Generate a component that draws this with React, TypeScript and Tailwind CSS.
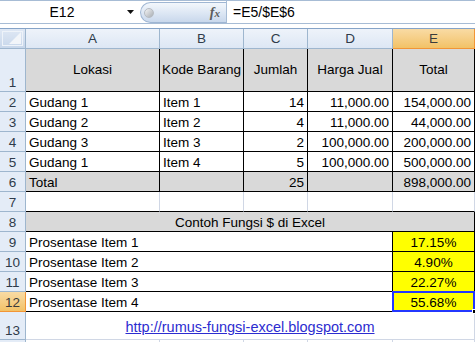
import React from "react";

const GRID = "border-[#d0d7e5]";

type CellProps = {
  children?: React.ReactNode;
  className?: string;
};

function HeadCol({ label, active }: { label: string; active?: boolean }) {
  return (
    <div
      className={
        active
          ? "flex items-center justify-center border-r border-b border-[#f29536] bg-gradient-to-b from-[#f9dba4] to-[#f2c266] text-[#3b3b3b]"
          : "flex items-center justify-center border-r border-b border-[#9eb6ce] bg-gradient-to-b from-[#eef3fa] to-[#dde7f4] text-[#2f3b4a]"
      }
    >
      {label}
    </div>
  );
}

function RowHead({ n, active }: { n: number; active?: boolean }) {
  return (
    <div
      className={
        active
          ? "flex items-end justify-center leading-[16px] border-r border-b border-[#f29536] bg-gradient-to-b from-[#f9dba4] to-[#f2c266] text-[#3b3b3b]"
          : "flex items-end justify-center leading-[16px] border-r border-b border-[#9eb6ce] bg-[#e4ecf7] text-[#2f3b4a]"
      }
    >
      {n}
    </div>
  );
}

function Cell({ children, className = "" }: CellProps) {
  return (
    <div
      className={`flex items-end leading-[16px] px-[3px] whitespace-nowrap overflow-hidden border-r border-b border-black ${className}`}
    >
      {children}
    </div>
  );
}

const rows = [
  { lokasi: "Gudang 1", kode: "Item 1", jumlah: "14", harga: "11,000.00", total: "154,000.00" },
  { lokasi: "Gudang 2", kode: "Item 2", jumlah: "4", harga: "11,000.00", total: "44,000.00" },
  { lokasi: "Gudang 3", kode: "Item 3", jumlah: "2", harga: "100,000.00", total: "200,000.00" },
  { lokasi: "Gudang 1", kode: "Item 4", jumlah: "5", harga: "100,000.00", total: "500,000.00" },
];

const persen = ["17.15%", "4.90%", "22.27%", "55.68%"];

function FormulaBar() {
  return (
    <div className="h-[29px] flex flex-col bg-white">
      <div className="h-[24px] flex border-t border-b border-[#a7bcd5]">
        {/* name box */}
        <div className="w-[140px] flex items-center">
          <div className="w-[124px] text-center text-[14px] text-black">E12</div>
          <svg width="8" height="4" viewBox="0 0 8 4" className="ml-[3px]">
            <path d="M0 0 H7 L3.5 4 Z" fill="#111" />
          </svg>
        </div>
        {/* fx pill */}
        <div className="w-[86px] h-[21px] mt-[1px] flex items-center rounded-l-full border border-r-0 border-[#9fb6d3] bg-gradient-to-b from-[#f3f7fc] to-[#c9d8ec]">
          <div className="ml-[3px] w-[10px] h-[10px] rounded-full bg-gradient-to-br from-[#f4f5f6] to-[#a9aeb4] border border-[#b7bcc2]" />
          <div className="ml-auto mr-[6px] font-['Liberation_Serif'] italic font-bold text-[14px] text-[#5c5c5c] leading-none">
            f<span className="text-[11px]">x</span>
          </div>
        </div>
        {/* formula */}
        <div className="flex-1 flex items-center pl-[6px] border-l border-[#a7bcd5] text-[14px] text-black">
          =E5/$E$6
        </div>
      </div>
      <div className="flex-1 border-b border-[#86a4c8]" />
    </div>
  );
}

export default function App() {
  return (
    <div className="w-[475px] h-[342px] overflow-hidden bg-white font-['Liberation_Sans',sans-serif] text-[13.5px] leading-[18px] text-black">
      <FormulaBar />
      <div className="grid grid-cols-[26px_134px_84px_64px_85px_82px] grid-rows-[20px_43px_repeat(11,20px)_28px_20px]">
        {/* column headers */}
        <div className="relative border-r border-b border-[#9eb6ce] bg-gradient-to-b from-[#dfe8f4] to-[#c8d7eb]">
          <div className="absolute inset-[2px] border border-[#eef3f9]" />
          <svg width="12" height="12" viewBox="0 0 12 12" className="absolute right-[4px] bottom-[4px]">
            <path d="M12 0 V12 H0 Z" fill="#f2f5f9" />
          </svg>
        </div>
        <HeadCol label="A" />
        <HeadCol label="B" />
        <HeadCol label="C" />
        <HeadCol label="D" />
        <HeadCol label="E" active />

        {/* row 1 */}
        <RowHead n={1} />
        <Cell className="bg-[#d9d9d9] !items-center justify-center">Lokasi</Cell>
        <Cell className="bg-[#d9d9d9] !items-center justify-center">Kode Barang</Cell>
        <Cell className="bg-[#d9d9d9] !items-center justify-center">Jumlah</Cell>
        <Cell className="bg-[#d9d9d9] !items-center justify-center">Harga Jual</Cell>
        <Cell className="bg-[#d9d9d9] !items-center justify-center">Total</Cell>

        {/* rows 2-5 */}
        {rows.map((r, i) => (
          <React.Fragment key={i}>
            <RowHead n={i + 2} />
            <Cell>{r.lokasi}</Cell>
            <Cell>{r.kode}</Cell>
            <Cell className="justify-end">{r.jumlah}</Cell>
            <Cell className="justify-end">{r.harga}</Cell>
            <Cell className="justify-end">{r.total}</Cell>
          </React.Fragment>
        ))}

        {/* row 6 */}
        <RowHead n={6} />
        <Cell className="bg-[#d9d9d9]">Total</Cell>
        <Cell className="bg-[#d9d9d9]" />
        <Cell className="bg-[#d9d9d9] justify-end">25</Cell>
        <Cell className="bg-[#d9d9d9]" />
        <Cell className="bg-[#d9d9d9] justify-end">898,000.00</Cell>

        {/* row 7 */}
        <RowHead n={7} />
        {[0, 1, 2, 3, 4].map((c) => (
          <div key={c} className={`border-r ${GRID} border-b-black border-b`} />
        ))}

        {/* row 8 */}
        <RowHead n={8} />
        <Cell className="col-span-5 bg-[#d9d9d9] justify-center">Contoh Fungsi $ di Excel</Cell>

        {/* rows 9-12 */}
        {persen.map((p, i) => (
          <React.Fragment key={i}>
            <RowHead n={i + 9} active={i === 3} />
            <Cell className="col-span-4">Prosentase Item {i + 1}</Cell>
            <Cell className="relative overflow-visible bg-[#ffff00] justify-center">
              {p}
              {i === 3 && (
                <>
                  <div className="absolute -left-[1px] -top-[1px] -right-[1px] -bottom-[1px] border-2 border-[#2337ff]" />
                  <div className="absolute -right-[3px] -bottom-[3px] w-[5px] h-[5px] bg-black border border-white" />
                </>
              )}
            </Cell>
          </React.Fragment>
        ))}

        {/* row 13 */}
        <RowHead n={13} />
        <div className={`col-span-5 flex items-center justify-center pt-[2px] border-r border-b ${GRID}`}>
          <span className="text-[14.5px] text-[#2c2cd0] underline decoration-[#2c2cd0]">http://rumus-fungsi-excel.blogspot.com</span>
        </div>

        {/* row 14 */}
        <div className="border-r border-b border-[#9eb6ce] bg-[#e4ecf7]" />
        {[0, 1, 2, 3, 4].map((c) => (
          <div key={c} className={`border-r border-b ${GRID}`} />
        ))}
      </div>
    </div>
  );
}
